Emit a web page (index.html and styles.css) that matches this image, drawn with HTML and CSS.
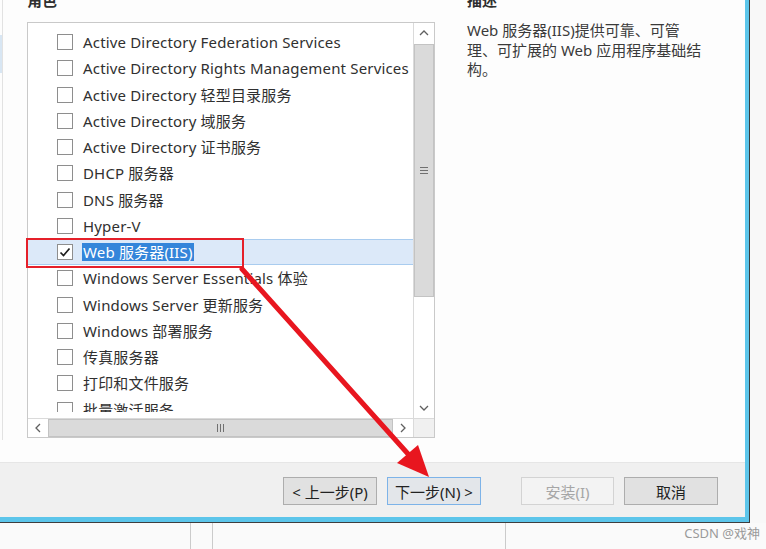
FILE: index.html
```html
<!DOCTYPE html>
<html lang="zh-CN">
<head>
<meta charset="utf-8">
<title>添加角色和功能向导</title>
<link rel="stylesheet" href="styles.css">
</head>
<body>
<div class="screen">
  <div class="top">
    <div class="frame">
      <div class="window">
        <div class="content">
          <div class="leftbar"><div class="leftsel"></div></div>
          <div class="roles">
            <div class="heading">角色</div>
            <div class="listbox">
              <div class="list">
                <div class="row"><span class="cb"></span><span class="label">Active Directory Federation Services</span></div>
                <div class="row"><span class="cb"></span><span class="label">Active Directory Rights Management Services</span></div>
                <div class="row"><span class="cb"></span><span class="label">Active Directory 轻型目录服务</span></div>
                <div class="row"><span class="cb"></span><span class="label">Active Directory 域服务</span></div>
                <div class="row"><span class="cb"></span><span class="label">Active Directory 证书服务</span></div>
                <div class="row"><span class="cb"></span><span class="label">DHCP 服务器</span></div>
                <div class="row"><span class="cb"></span><span class="label">DNS 服务器</span></div>
                <div class="row"><span class="cb"></span><span class="label">Hyper-V</span></div>
                <div class="row selected"><span class="cb"><svg width="14" height="14" viewBox="0 0 14 14"><polyline points="2.5,7.5 5.5,10.5 11.5,3.5" fill="none" stroke="#1e1e1e" stroke-width="1.7"/></svg></span><span class="label sel-text">Web 服务器(IIS)</span></div>
                <div class="row"><span class="cb"></span><span class="label">Windows Server Essentials 体验</span></div>
                <div class="row"><span class="cb"></span><span class="label">Windows Server 更新服务</span></div>
                <div class="row"><span class="cb"></span><span class="label">Windows 部署服务</span></div>
                <div class="row"><span class="cb"></span><span class="label">传真服务器</span></div>
                <div class="row"><span class="cb"></span><span class="label">打印和文件服务</span></div>
                <div class="row"><span class="cb"></span><span class="label">批量激活服务</span></div>
              </div>
              <div class="vscroll">
                <div class="sbtn"><svg width="10" height="6" viewBox="0 0 10 6"><polyline points="1,5 5,1 9,5" fill="none" stroke="#606060" stroke-width="1.3"/></svg></div>
                <div class="vthumb"><svg width="8" height="7" viewBox="0 0 8 7"><path d="M0 0.5H8M0 3.5H8M0 6.5H8" stroke="#707070" stroke-width="1"/></svg></div>
                <div class="track"></div>
                <div class="sbtn"><svg width="10" height="6" viewBox="0 0 10 6"><polyline points="1,1 5,5 9,1" fill="none" stroke="#606060" stroke-width="1.3"/></svg></div>
              </div>
              <div class="hscroll">
                <div class="hbtn"><svg width="6" height="10" viewBox="0 0 6 10"><polyline points="5,1 1,5 5,9" fill="none" stroke="#606060" stroke-width="1.3"/></svg></div>
                <div class="hthumb"><svg width="7" height="8" viewBox="0 0 7 8"><path d="M0.5 0V8M3.5 0V8M6.5 0V8" stroke="#707070" stroke-width="1"/></svg></div>
                <div class="hbtn"><svg width="6" height="10" viewBox="0 0 6 10"><polyline points="1,1 5,5 1,9" fill="none" stroke="#606060" stroke-width="1.3"/></svg></div>
              </div>
              <div class="corner"></div>
            </div>
          </div>
          <div class="desc">
            <div class="heading">描述</div>
            <p class="desc-text">Web 服务器(IIS)提供可靠、可管理、可扩展的 Web 应用程序基础结构。</p>
          </div>
        </div>
        <div class="buttons">
          <button class="btn">&lt; 上一步(P)</button>
          <button class="btn focus">下一步(N) &gt;</button>
          <button class="btn disabled">安装(I)</button>
          <button class="btn">取消</button>
        </div>
      </div>
    </div>
    <div class="outside"></div>
  </div>
  <div class="bottom">
    <div class="cell c1"></div>
    <div class="cell c2"></div>
    <div class="cell c3"></div>
    <div class="cell c4"><span class="watermark">CSDN @戏神</span></div>
  </div>
  <div class="redbox"></div>
  <svg class="arrow" width="766" height="549" viewBox="0 0 766 549">
    <line x1="242" y1="269" x2="409" y2="455" stroke="#e8161f" stroke-width="5" stroke-linecap="round"/>
    <polygon points="429,477 397,463 418,445" fill="#e8161f"/>
  </svg>
</div>
</body>
</html>
```
FILE: styles.css
```css
* { box-sizing: border-box; }
html, body { margin: 0; padding: 0; }
body {
  width: 766px;
  height: 549px;
  overflow: hidden;
  background: #f7f7f7;
  font-family: "Noto Sans", "Noto Sans CJK SC", sans-serif;
  color: #333;
}
.screen {
  position: relative;
  width: 766px;
  height: 549px;
  display: flex;
  flex-direction: column;
}
.top { display: flex; height: 523px; }
.frame {
  width: 750px;
  height: 523px;
  border-right: 1px solid #3e3e3e;
  border-bottom: 1px solid #3e3e3e;
}
.window {
  width: 749px;
  height: 522px;
  border-right: 4px solid #5cc5ea;
  border-bottom: 5px solid #5cc5ea;
  display: flex;
  flex-direction: column;
}
.outside { flex: 1; background: #f8f8f8; }
.content {
  height: 462px;
  background: #fdfdfd;
  display: flex;
}
.leftbar {
  width: 3px;
  height: 440px;
  border-right: 1px solid #e2e2e2;
  padding-top: 35px;
}
.leftsel { width: 2px; height: 38px; background: #d8e6f3; }
.roles { margin-left: 24px; width: 408px; display: flex; flex-direction: column; }
.heading {
  margin-top: -10px;
  height: 20px;
  line-height: 20px;
  font-size: 15px;
  font-weight: 700;
  color: #2e2e2e;
}
.listbox {
  margin-top: 12px;
  width: 408px;
  height: 416px;
  border: 1px solid #c9c9c9;
  background: #fff;
  display: grid;
  grid-template-columns: 385px 21px;
  grid-template-rows: 395px 19px;
}
.list {
  height: 389px;
  overflow: hidden;
  padding-top: 6px;
}
.row {
  height: 26.25px;
  display: flex;
  align-items: center;
  padding-left: 29px;
  font-size: 15px;
  white-space: nowrap;
}
.cb {
  width: 16px;
  height: 16px;
  border: 1px solid #8e8e8e;
  background: #fff;
  margin-right: 10px;
  flex: none;
  display: flex;
  align-items: center;
  justify-content: center;
}
.label { color: #303030; line-height: 18px; letter-spacing: 0.17px; }
.row.selected {
  background: #dce9f9;
  border-top: 1px solid #a9ccef;
  border-bottom: 1px solid #a9ccef;
}
.sel-text {
  background: #3485da;
  color: #fff;
  padding: 0 1px;
  margin-left: -1px;
}
.vscroll {
  border-left: 1px solid #dadada;
  display: flex;
  flex-direction: column;
  background: #fff;
}
.sbtn {
  height: 20px;
  flex: none;
  display: flex;
  align-items: center;
  justify-content: center;
}
.vthumb {
  height: 253px;
  margin-top: 1px;
  background: #dadada;
  border: 1px solid #c3c3c3;
  display: flex;
  align-items: center;
  justify-content: center;
}
.track { flex: 1; }
.hscroll {
  border-top: 1px solid #dadada;
  display: flex;
  background: #fff;
}
.hbtn {
  width: 20px;
  flex: none;
  display: flex;
  align-items: center;
  justify-content: center;
}
.hthumb {
  flex: 1;
  background: #dadada;
  border: 1px solid #c3c3c3;
  display: flex;
  align-items: center;
  justify-content: center;
}
.corner {
  background: #f0f0f0;
  border-left: 1px solid #dadada;
  border-top: 1px solid #dadada;
}
.desc { margin-left: 32px; width: 240px; display: flex; flex-direction: column; }
.desc-text {
  margin: 11px 0 0;
  font-size: 15px;
  line-height: 19.5px;
  color: #3a3a3a;
}
.buttons {
  height: 55px;
  background: #f0f0f0;
  border-top: 1px solid #e6e6e6;
  padding: 14px 27px 0 0;
  display: flex;
  justify-content: flex-end;
  align-items: flex-start;
}
.btn {
  width: 94px;
  height: 28px;
  margin-left: 10px;
  padding: 0;
  font-family: "Noto Sans", "Noto Sans CJK SC", sans-serif;
  font-size: 15px;
  color: #222;
  background: #e1e1e1;
  border: 1px solid #adadad;
}
.btn.focus { border: 1px solid #7db3e8; background: #e3e6ea; }
.btn.disabled {
  width: 93px;
  margin-left: 40px;
  background: #f3f3f3;
  border-color: #d3d3d3;
  color: #a6a6a6;
}
.bottom {
  flex: 1;
  display: flex;
  background: #fafafa;
}
.cell { height: 100%; }
.c1 { width: 191px; border-right: 1px solid #cbcbcb; }
.c2 { width: 22px; border-right: 1px solid #cbcbcb; }
.c3 { width: 293px; border-right: 1px solid #cbcbcb; }
.c4 { flex: 1; display: flex; justify-content: flex-end; padding: 2px 6px 0 0; }
.watermark { font-size: 13px; color: #9a9a9a; line-height: 17px; }
.redbox {
  position: absolute;
  left: 26px;
  top: 238px;
  width: 218px;
  height: 30px;
  border: 2px solid #e5202a;
}
.arrow { position: absolute; left: 0; top: 0; pointer-events: none; }
```
